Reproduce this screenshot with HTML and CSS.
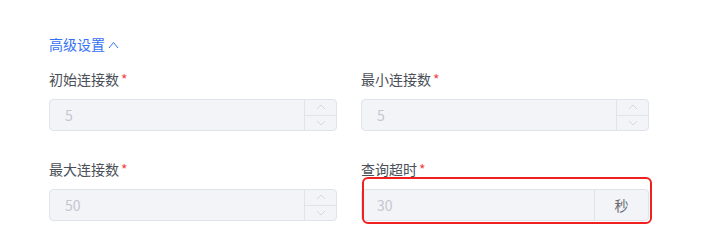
FILE: index.html
```html
<!DOCTYPE html>
<html lang="zh-CN">
<head>
    <meta charset="UTF-8">
    <title>高级设置</title>
    <link rel="stylesheet" href="styles.css">
</head>
<body>
    <div class="panel">
        <a class="toggle" href="#">高级设置<svg class="chevron" width="11" height="8" viewBox="0 0 11 8"><path d="M1 7 L5.5 1.5 L10 7" fill="none" stroke="currentColor" stroke-width="1"/></svg></a>
        <div class="form-grid">
            <div class="form-item">
                <label>初始连接数<span class="req">*</span></label>
                <div class="number-input">
                    <span class="value">5</span>
                    <div class="stepper">
                        <span class="step"><svg width="10" height="6" viewBox="0 0 10 6"><path d="M1 5 L5 1 L9 5" fill="none" stroke="currentColor" stroke-width="1"/></svg></span>
                        <span class="step"><svg width="10" height="6" viewBox="0 0 10 6"><path d="M1 1 L5 5 L9 1" fill="none" stroke="currentColor" stroke-width="1"/></svg></span>
                    </div>
                </div>
            </div>
            <div class="form-item">
                <label>最小连接数<span class="req">*</span></label>
                <div class="number-input">
                    <span class="value">5</span>
                    <div class="stepper">
                        <span class="step"><svg width="10" height="6" viewBox="0 0 10 6"><path d="M1 5 L5 1 L9 5" fill="none" stroke="currentColor" stroke-width="1"/></svg></span>
                        <span class="step"><svg width="10" height="6" viewBox="0 0 10 6"><path d="M1 1 L5 5 L9 1" fill="none" stroke="currentColor" stroke-width="1"/></svg></span>
                    </div>
                </div>
            </div>
            <div class="form-item">
                <label>最大连接数<span class="req">*</span></label>
                <div class="number-input">
                    <span class="value">50</span>
                    <div class="stepper">
                        <span class="step"><svg width="10" height="6" viewBox="0 0 10 6"><path d="M1 5 L5 1 L9 5" fill="none" stroke="currentColor" stroke-width="1"/></svg></span>
                        <span class="step"><svg width="10" height="6" viewBox="0 0 10 6"><path d="M1 1 L5 5 L9 1" fill="none" stroke="currentColor" stroke-width="1"/></svg></span>
                    </div>
                </div>
            </div>
            <div class="form-item highlighted">
                <label>查询超时<span class="req">*</span></label>
                <div class="number-input">
                    <span class="value">30</span>
                    <span class="addon">秒</span>
                </div>
                <div class="highlight"></div>
            </div>
        </div>
    </div>
</body>
</html>
```

FILE: styles.css
```css
* {
    margin: 0;
    padding: 0;
    box-sizing: border-box;
}

html, body {
    height: 100%;
}

body {
    background: #ffffff;
    font-family: "Noto Sans CJK SC", "Noto Sans", sans-serif;
    font-size: 14px;
    color: #4a4f58;
}

.panel {
    padding: 34px 0 0 49px;
}

.toggle {
    display: inline-flex;
    align-items: center;
    height: 20px;
    line-height: 20px;
    color: #3471f3;
    text-decoration: none;
    font-size: 14px;
}

.chevron {
    margin-left: 3px;
    margin-top: 1px;
}

.form-grid {
    display: grid;
    grid-template-columns: 288px 288px;
    column-gap: 24px;
    row-gap: 28px;
    margin-top: 15px;
}

.form-item {
    position: relative;
}

.form-item label {
    display: block;
    height: 20px;
    line-height: 20px;
    margin-bottom: 10px;
    color: #4a4f58;
}

.req {
    color: #f53f3f;
    margin-left: 2px;
}

.number-input {
    display: flex;
    height: 32px;
    background: #f2f4f8;
    border: 1px solid #dfe3ea;
    border-radius: 4px;
}

.value {
    flex: 1;
    padding-left: 15px;
    line-height: 30px;
    color: #c3c7cf;
}

.stepper {
    width: 32px;
    display: flex;
    flex-direction: column;
    border-left: 1px solid #dfe3ea;
}

.step {
    flex: 1;
    display: flex;
    align-items: center;
    justify-content: center;
    color: #d3d7de;
}

.step + .step {
    border-top: 1px solid #dfe3ea;
}

.addon {
    width: 54px;
    border-left: 1px solid #dfe3ea;
    text-align: center;
    line-height: 30px;
    color: #66696f;
}

.highlight {
    position: absolute;
    left: 1px;
    top: 18px;
    width: 290px;
    height: 47px;
    border: 2px solid #f0201f;
    border-radius: 6px;
    pointer-events: none;
}
```
